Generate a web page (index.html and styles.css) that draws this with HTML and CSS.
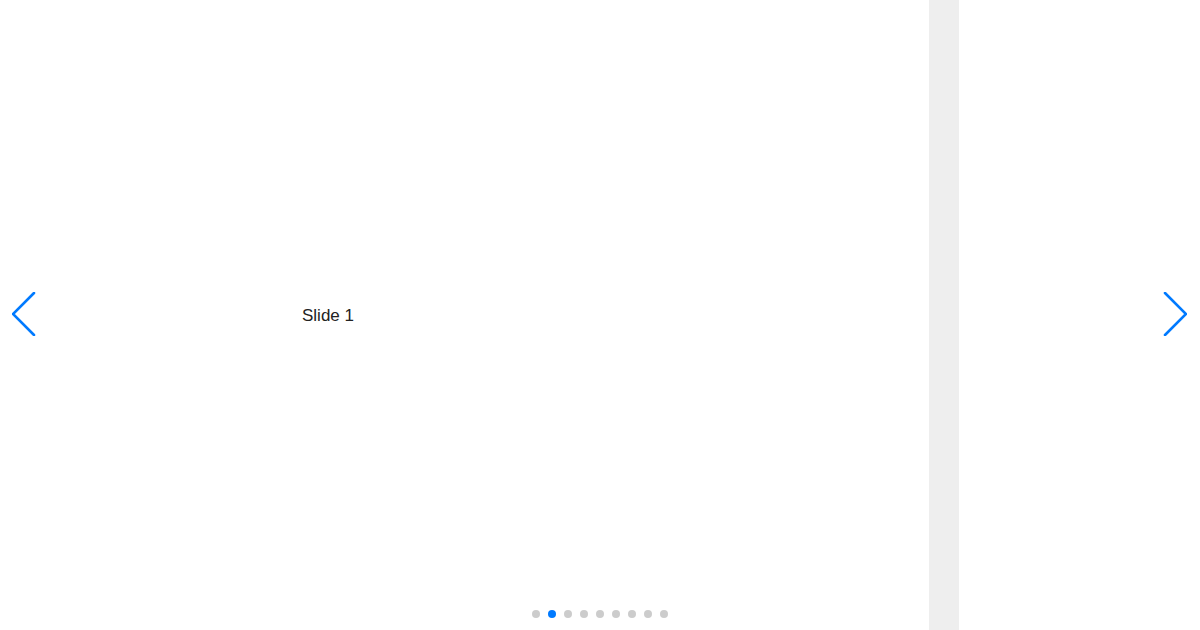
FILE: index.html
```html
<!DOCTYPE html>
<html>
<head>
<meta charset="utf-8">
<link rel="stylesheet" href="styles.css">
</head>
<body>
<div class="swiper">
  <div class="track">
    <div class="slide slide-main"><div class="label-box"><span class="label">Slide 1</span></div></div>
    <div class="slide slide-next"></div>
  </div>
  <button class="nav nav-prev" aria-label="Previous">
    <svg width="27" height="44" viewBox="0 0 27 44"><path d="M22 1 L1 22 L22 43" fill="none" stroke="#007aff" stroke-width="2.6" stroke-linecap="round" stroke-linejoin="miter"/></svg>
  </button>
  <button class="nav nav-next" aria-label="Next">
    <svg width="27" height="44" viewBox="0 0 27 44"><path d="M5 1 L26 22 L5 43" fill="none" stroke="#007aff" stroke-width="2.6" stroke-linecap="round" stroke-linejoin="miter"/></svg>
  </button>
  <div class="pagination">
    <span class="dot"></span>
    <span class="dot active"></span>
    <span class="dot"></span>
    <span class="dot"></span>
    <span class="dot"></span>
    <span class="dot"></span>
    <span class="dot"></span>
    <span class="dot"></span>
    <span class="dot"></span>
  </div>
</div>
</body>
</html>
```

FILE: styles.css
```css
html, body {
  margin: 0;
  padding: 0;
  width: 1200px;
  height: 630px;
  overflow: hidden;
  background: #eeeeee;
  font-family: "Liberation Sans", Arial, Helvetica, sans-serif;
}
.swiper {
  position: relative;
  width: 1200px;
  height: 630px;
  overflow: hidden;
}
.track {
  display: flex;
  gap: 30px;
  height: 100%;
}
.slide {
  background: #fff;
  height: 100%;
  flex-shrink: 0;
}
.slide-main {
  width: 929px;
}
.slide-next {
  flex: 1;
}
.label-box {
  width: 656px;
  height: 100%;
  display: flex;
  align-items: center;
  justify-content: center;
}
.label {
  font-size: 17px;
  color: #222;
  line-height: 1;
}
.nav {
  position: absolute;
  top: 292px;
  width: 27px;
  height: 44px;
  padding: 0;
  margin: 0;
  border: 0;
  background: none;
  display: block;
}
.nav svg { display: block; }
.nav-prev { left: 12px; }
.nav-next { left: 1160px; }
.pagination {
  position: absolute;
  left: 0;
  right: 0;
  top: 610px;
  display: flex;
  justify-content: center;
  gap: 8px;
  padding-left: 0;
}
.dot {
  width: 8px;
  height: 8px;
  border-radius: 50%;
  background: #cccccc;
}
.dot.active {
  background: #007aff;
}
```
